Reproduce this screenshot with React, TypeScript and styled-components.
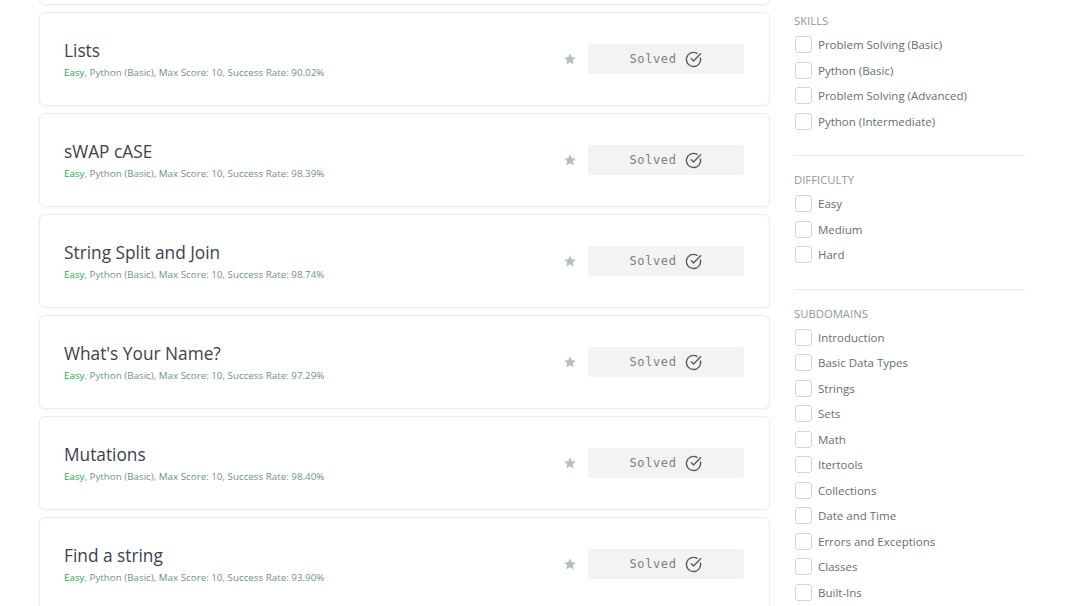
import React from 'react';
import styled, {createGlobalStyle} from 'styled-components';
import {CircleCheckBig} from 'lucide-react';

const GlobalStyle = createGlobalStyle`
    html, body {
        margin: 0;
        padding: 0;
        background: #fff;
        font-family: "Open Sans", "Liberation Sans", sans-serif;
        overflow: hidden;
    }
`;

interface Challenge {
    title: string;
    rate: string;
}

const challenges: Challenge[] = [
    {title: 'List Comprehensions', rate: '97.74%'},
    {title: 'Lists', rate: '90.02%'},
    {title: 'sWAP cASE', rate: '98.39%'},
    {title: 'String Split and Join', rate: '98.74%'},
    {title: "What's Your Name?", rate: '97.29%'},
    {title: 'Mutations', rate: '98.40%'},
    {title: 'Find a string', rate: '93.90%'},
];

const filterGroups = [
    {name: 'Skills', items: ['Problem Solving (Basic)', 'Python (Basic)', 'Problem Solving (Advanced)', 'Python (Intermediate)']},
    {name: 'Difficulty', items: ['Easy', 'Medium', 'Hard']},
    {name: 'Subdomains', items: ['Introduction', 'Basic Data Types', 'Strings', 'Sets', 'Math', 'Itertools', 'Collections', 'Date and Time', 'Errors and Exceptions', 'Classes', 'Built-Ins']},
];

const Page = styled.div`
    display: flex;
    align-items: flex-start;
    gap: 24px;
    padding-left: 39px;
    height: 606px;
    overflow: hidden;
`;

// list is scrolled: the first card only shows its bottom edge
const List = styled.div`
    display: flex;
    flex-direction: column;
    gap: 7px;
    width: 731px;
    margin-top: -89px;
`;

const Card = styled.div`
    box-sizing: border-box;
    height: 94px;
    display: flex;
    align-items: center;
    justify-content: space-between;
    padding: 0 25px 0 24px;
    background: #fff;
    border: 1px solid #eaecef;
    border-radius: 6px;
    box-shadow: 0 1px 3px rgba(0, 0, 0, 0.04);
`;

const Info = styled.div`
    display: flex;
    flex-direction: column;
    gap: 3px;
`;

const Title = styled.div`
    font-size: 17.3px;
    line-height: 24px;
    color: #39424e;
`;

const Meta = styled.div`
    font-size: 9.8px;
    line-height: 14px;
    color: #738f93;
`;

const Easy = styled.span`
    color: #1ba94c;
`;

const Actions = styled.div`
    display: flex;
    align-items: center;
    gap: 11px;
`;

const SolvedButton = styled.div`
    width: 156px;
    height: 30px;
    display: flex;
    align-items: center;
    justify-content: center;
    gap: 9px;
    background: #f3f3f4;
    border-radius: 3px;
    font-family: "DejaVu Sans Mono", "Liberation Mono", monospace;
    font-size: 12px;
    letter-spacing: 0.6px;
    color: #808080;
`;

const Sidebar = styled.aside`
    width: 231px;
    padding-top: 13px;
    display: flex;
    flex-direction: column;
`;

const Group = styled.div<{last?: boolean}>`
    padding-bottom: ${p => (p.last ? 0 : 21)}px;
    margin-bottom: 16px;
    border-bottom: ${p => (p.last ? 'none' : '1px solid #ebebeb')};
`;

const GroupTitle = styled.div`
    font-size: 11.3px;
    line-height: 16px;
    color: #8c9aa3;
    text-transform: uppercase;
    margin-bottom: 3px;
`;

const Option = styled.label`
    display: flex;
    align-items: center;
    gap: 6px;
    height: 25.5px;
    font-size: 11.5px;
    color: #5f6f78;
`;

const Box = styled.span`
    box-sizing: border-box;
    width: 17px;
    height: 17px;
    border: 1px solid #d3d6d9;
    border-radius: 3px;
    background: #fff;
    margin-left: 1px;
`;

const Star = () => (
    <svg width='14' height='14' viewBox='0 0 24 24'>
        <path
            d='M12 2.2l2.95 6.6 7.2.7-5.4 4.8 1.6 7.1L12 17.7l-6.35 3.7 1.6-7.1-5.4-4.8 7.2-.7z'
            fill='#b1c0c6'
        />
    </svg>
);

const App = () => (
    <>
        <GlobalStyle />
        <Page>
            <List>
                {challenges.map(c => (
                    <Card key={c.title}>
                        <Info>
                            <Title>{c.title}</Title>
                            <Meta>
                                <Easy>Easy</Easy>, Python (Basic), Max Score: 10, Success Rate: {c.rate}
                            </Meta>
                        </Info>
                        <Actions>
                            <Star />
                            <SolvedButton>
                                Solved
                                <CircleCheckBig size={17} strokeWidth={2} color='#5b5b5b' />
                            </SolvedButton>
                        </Actions>
                    </Card>
                ))}
            </List>
            <Sidebar>
                {filterGroups.map((g, i) => (
                    <Group key={g.name} last={i === filterGroups.length - 1}>
                        <GroupTitle>{g.name}</GroupTitle>
                        {g.items.map(item => (
                            <Option key={item}>
                                <Box />
                                {item}
                            </Option>
                        ))}
                    </Group>
                ))}
            </Sidebar>
        </Page>
    </>
);

export default App;
